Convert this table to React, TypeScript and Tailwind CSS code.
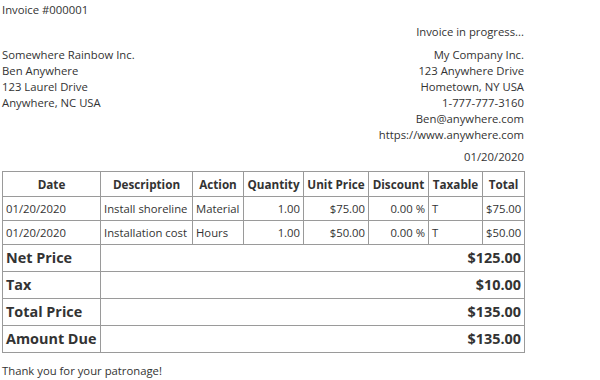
import React from "react";

const cols = [98, 92, 51, 60, 65, 60, 54, 42];

const rows = [
  ["01/20/2020", "Install shoreline", "Material", "1.00", "$75.00", "0.00 %", "T", "$75.00"],
  ["01/20/2020", "Installation cost", "Hours", "1.00", "$50.00", "0.00 %", "T", "$50.00"],
];

const totals = [
  ["Net Price", "$125.00"],
  ["Tax", "$10.00"],
  ["Total Price", "$135.00"],
  ["Amount Due", "$135.00"],
];

const align = ["text-left", "text-left", "text-left", "text-right", "text-right", "text-right", "text-left", "text-right"];

export default function App() {
  return (
    <div className="w-[600px] h-[380px] bg-white text-[#333] text-[11.3px] leading-[16px] font-['Open_Sans',sans-serif] pl-[2px] pt-[2px]">
      <div className="w-[522px]">
        <div>Invoice #000001</div>
        <div className="text-right mt-[6px]">Invoice in progress...</div>
        <div className="flex justify-between mt-[7px]">
          <div>
            <div>Somewhere Rainbow Inc.</div>
            <div>Ben Anywhere</div>
            <div>123 Laurel Drive</div>
            <div>Anywhere, NC USA</div>
          </div>
          <div className="text-right">
            <div>My Company Inc.</div>
            <div>123 Anywhere Drive</div>
            <div>Hometown, NY USA</div>
            <div>1-777-777-3160</div>
            <div>Ben@anywhere.com</div>
            <div>https://www.anywhere.com</div>
            <div className="mt-[6px]">01/20/2020</div>
          </div>
        </div>
        <table className="mt-[6px] w-[522px] table-fixed border-collapse border border-[#9a9a9a]">
          <colgroup>
            {cols.map((w, i) => (
              <col key={i} style={{ width: w }} />
            ))}
          </colgroup>
          <thead>
            <tr className="h-[25px]">
              {["Date", "Description", "Action", "Quantity", "Unit Price", "Discount", "Taxable", "Total"].map((h) => (
                <th key={h} className="border border-[#9a9a9a] font-bold text-[11.7px] text-center px-0 whitespace-nowrap">
                  {h}
                </th>
              ))}
            </tr>
          </thead>
          <tbody>
            {rows.map((r, ri) => (
              <tr key={ri} className="h-[24px]">
                {r.map((c, ci) => (
                  <td key={ci} className={`border border-[#9a9a9a] px-[3px] whitespace-nowrap ${align[ci]}`}>
                    {c}
                  </td>
                ))}
              </tr>
            ))}
            {totals.map(([l, v]) => (
              <tr key={l} className="h-[27px] text-[14.4px] font-bold">
                <td className="border border-[#9a9a9a] px-[3px] whitespace-nowrap">{l}</td>
                <td colSpan={7} className="border border-[#9a9a9a] px-[3px] text-right">
                  {v}
                </td>
              </tr>
            ))}
          </tbody>
        </table>
        <div className="mt-[10px]">Thank you for your patronage!</div>
      </div>
    </div>
  );
}
